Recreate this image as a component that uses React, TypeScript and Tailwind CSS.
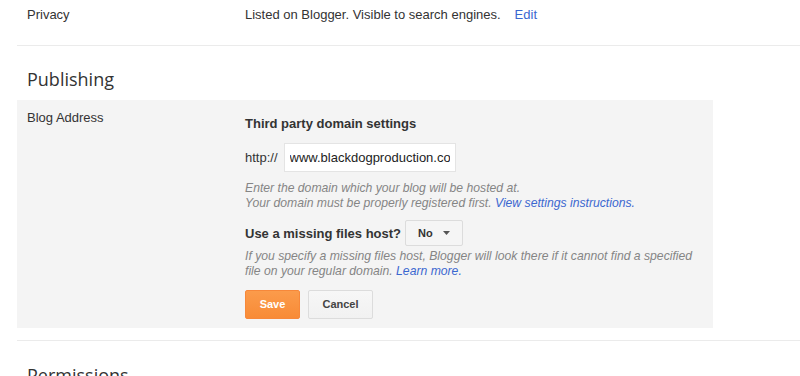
export default function App() {
  return (
    <div className="min-h-screen bg-white pl-[17px] font-['Liberation_Sans',Arial,sans-serif] text-[13px] leading-[15px] text-[#333]">
      {/* Privacy row */}
      <div className="flex h-[46px] border-b border-[#ebebeb] pt-[7px]">
        <div className="w-[228px] pl-[10px]">Privacy</div>
        <div>
          Listed on Blogger. Visible to search engines.
          <a href="#" className="ml-[14px] text-[#3b67d0]">Edit</a>
        </div>
      </div>

      <h2 className="pb-[9px] pl-[10px] pt-[21px] font-['Open_Sans',sans-serif] text-[18px] leading-[24px] text-[#333]">
        Publishing
      </h2>

      {/* Blog address editor */}
      <div className="flex w-[696px] bg-[#f4f4f4] pb-[9px] pt-[10px]">
        <div className="w-[228px] shrink-0 pl-[10px]">Blog Address</div>
        <div className="mt-[6px] flex-1">
          <div className="font-bold text-[#333]">Third party domain settings</div>

          <div className="mt-[12px] flex items-center">
            <span className="mr-[6px]">http://</span>
            <input
              type="text"
              defaultValue="www.blackdogproduction.com"
              className="h-[29px] w-[172px] border border-[#e4e4e4] bg-white px-[5px] text-[13px] text-[#222] outline-none"
            />
          </div>

          <p className="mt-[9px] text-[12.2px] italic leading-[14.5px] text-[#858585]">
            Enter the domain which your blog will be hosted at.
            <br />
            Your domain must be properly registered first.{" "}
            <a href="#" className="text-[#3b67d0]">View settings instructions.</a>
          </p>

          <div className="mt-[10px] flex items-center">
            <span className="font-bold text-[#333]">Use a missing files host?</span>
            <button className="ml-[4px] flex h-[26px] w-[58px] items-center rounded-[2px] border border-[#dcdcdc] bg-[#f5f5f5] pl-[12px] text-[11px] font-bold text-[#333]">
              No
              <svg width="7" height="4" viewBox="0 0 7 4" className="ml-[10px]">
                <path d="M0 0h7L3.5 4z" fill="#555" />
              </svg>
            </button>
          </div>

          <p className="mt-[3px] w-[460px] text-[12.2px] italic leading-[15px] text-[#858585]">
            If you specify a missing files host, Blogger will look there if it cannot find a specified file on your regular domain.{" "}
            <a href="#" className="text-[#3b67d0]">Learn more.</a>
          </p>

          <div className="mt-[11px] flex gap-[8px]">
            <button className="h-[29px] w-[55px] rounded-[2px] border border-[#f7883a] bg-gradient-to-b from-[#fb9b4b] to-[#f88b36] text-[11px] font-bold text-white">
              Save
            </button>
            <button className="h-[29px] w-[65px] rounded-[2px] border border-[#dcdcdc] bg-gradient-to-b from-[#f7f7f7] to-[#f1f1f1] text-[11px] font-bold text-[#444]">
              Cancel
            </button>
          </div>
        </div>
      </div>

      <div className="mt-[12px] border-t border-[#ebebeb]" />

      <h2 className="pl-[10px] pt-[22px] font-['Open_Sans',sans-serif] text-[18px] leading-[24px] text-[#333]">
        Permissions
      </h2>
    </div>
  );
}
